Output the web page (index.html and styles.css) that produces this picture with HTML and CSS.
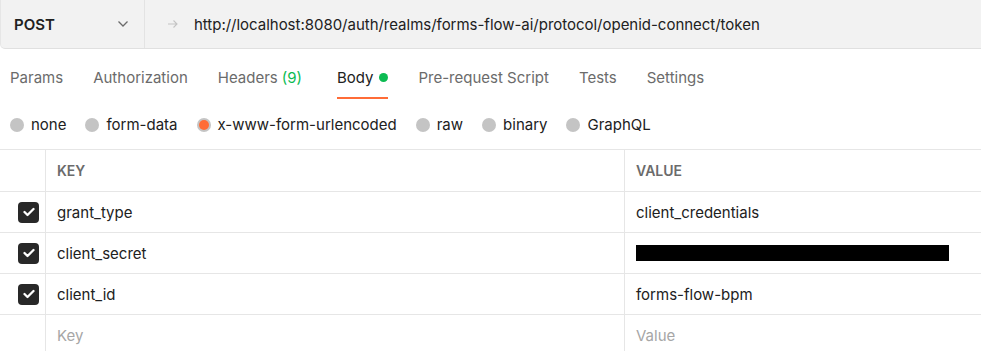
FILE: index.html
```html
<!DOCTYPE html>
<html>
<head>
<meta charset="utf-8">
<link rel="stylesheet" href="styles.css">
</head>
<body>
<div class="urlbar">
  <div class="method">
    <span class="method-name">POST</span>
    <svg class="chev" width="12" height="8" viewBox="0 0 12 8"><path d="M1.5 1.5 L6 6 L10.5 1.5" fill="none" stroke="#6b6b6b" stroke-width="1.3"/></svg>
  </div>
  <div class="url">
    <svg class="arrow" width="12" height="10" viewBox="0 0 12 10"><path d="M1 5 H10 M6.5 1.5 L10 5 L6.5 8.5" fill="none" stroke="#c4c4c4" stroke-width="1.1"/></svg>
    <span class="url-text">http://localhost:8080/auth/realms/forms-flow-ai/protocol/openid-connect/token</span>
  </div>
</div>

<div class="tabs">
  <span class="tab">Params</span>
  <span class="tab">Authorization</span>
  <span class="tab headers">Headers <span class="count">(9)</span></span>
  <span class="tab active">Body <span class="dot"></span></span>
  <span class="tab">Pre-request Script</span>
  <span class="tab">Tests</span>
  <span class="tab">Settings</span>
</div>

<div class="radios">
  <span class="radio"><span class="circle"></span>none</span>
  <span class="radio"><span class="circle"></span>form-data</span>
  <span class="radio"><span class="circle selected"></span>x-www-form-urlencoded</span>
  <span class="radio"><span class="circle"></span>raw</span>
  <span class="radio"><span class="circle"></span>binary</span>
  <span class="radio"><span class="circle"></span>GraphQL</span>
</div>

<div class="table">
  <div class="row head">
    <div class="cell chk"></div>
    <div class="cell key">KEY</div>
    <div class="cell val">VALUE</div>
  </div>
  <div class="row">
    <div class="cell chk"><span class="box"><svg width="12" height="10" viewBox="0 0 12 10"><path d="M1.5 5 L4.5 8 L10.5 2" fill="none" stroke="#fff" stroke-width="2.3" stroke-linecap="round" stroke-linejoin="round"/></svg></span></div>
    <div class="cell key">grant_type</div>
    <div class="cell val">client_credentials</div>
  </div>
  <div class="row">
    <div class="cell chk"><span class="box"><svg width="12" height="10" viewBox="0 0 12 10"><path d="M1.5 5 L4.5 8 L10.5 2" fill="none" stroke="#fff" stroke-width="2.3" stroke-linecap="round" stroke-linejoin="round"/></svg></span></div>
    <div class="cell key">client_secret</div>
    <div class="cell val"><span class="redact"></span></div>
  </div>
  <div class="row">
    <div class="cell chk"><span class="box"><svg width="12" height="10" viewBox="0 0 12 10"><path d="M1.5 5 L4.5 8 L10.5 2" fill="none" stroke="#fff" stroke-width="2.3" stroke-linecap="round" stroke-linejoin="round"/></svg></span></div>
    <div class="cell key">client_id</div>
    <div class="cell val">forms-flow-bpm</div>
  </div>
  <div class="row last">
    <div class="cell chk"></div>
    <div class="cell key ph">Key</div>
    <div class="cell val ph">Value</div>
  </div>
</div>
</body>
</html>
```

FILE: styles.css
```css
* { box-sizing: border-box; }
html, body { margin: 0; padding: 0; background: #fff; }
body {
  font-family: Inter, "Noto Sans", "Liberation Sans", sans-serif;
  font-size: 15px;
  color: #212121;
  width: 981px;
  height: 351px;
  overflow: hidden;
}

.urlbar {
  display: flex;
  height: 49px;
  background: #f2f2f2;
  border-bottom: 1px solid #e0e0e0;
  border-left: 1px solid #e6e6e6;
  border-radius: 0 0 0 5px;
  margin-right: -10px;
}
.method {
  width: 144px;
  display: flex;
  align-items: center;
  justify-content: space-between;
  padding: 0 15px 0 13px;
  border-right: 1px solid #e3e3e3;
}
.method-name { font-weight: 600; font-size: 15px; color: #212121; }
.chev { display: block; }
.url {
  flex: 1;
  display: flex;
  align-items: center;
  padding-left: 22px;
}
.arrow { display: block; margin-right: 15px; }
.url-text { color: #212121; letter-spacing: -0.02px; }

.tabs {
  display: flex;
  height: 50px;
  align-items: stretch;
  padding-left: 10px;
}
.tab {
  color: #6b6b6b;
  margin-right: 30px;
  position: relative;
  display: flex;
  align-items: center;
  padding-top: 7px;
}
.tab.headers { margin-right: 35px; }
.tab .count { color: #0cbb52; margin-left: 4px; }
.tab.active { color: #212121; }
.tab.active::after {
  content: "";
  position: absolute;
  left: 0; right: 0; bottom: 0;
  height: 2px;
  background: #ff6c37;
}
.dot {
  display: inline-block;
  width: 9px; height: 9px;
  border-radius: 50%;
  background: #0cbb52;
  margin-left: 6px;
}

.radios {
  display: flex;
  align-items: center;
  height: 50px;
  padding-left: 10px;
  padding-top: 1px;
}
.radio {
  display: flex;
  align-items: center;
  margin-right: 19px;
  color: #212121;
}
.circle {
  width: 14px; height: 14px;
  border-radius: 50%;
  background: #c4c4c4;
  margin-right: 7px;
  position: relative;
}
.circle.selected::after {
  content: "";
  position: absolute;
  left: 2px; top: 2px;
  width: 10px; height: 10px;
  border-radius: 50%;
  background: #ff6c37;
}

.table {
  border-top: 1px solid #e6e6e6;
}
.row {
  display: flex;
  height: 41px;
  border-bottom: 1px solid #e6e6e6;
}
.row.head { height: 42px; }
.row.last { border-bottom: none; }
.cell {
  display: flex;
  align-items: center;
}
.cell.chk {
  width: 46px;
  border-right: 1px solid #e6e6e6;
  padding-left: 18px;
}
.cell.key {
  width: 579px;
  border-right: 1px solid #e6e6e6;
  padding-left: 11px;
}
.cell.val {
  flex: 1;
  padding-left: 11px;
}
.head .cell.key, .head .cell.val {
  font-weight: 600;
  color: #6b6b6b;
  font-size: 14px;
}
.ph { color: #a6a6a6; }
.box {
  width: 21px; height: 21px;
  border-radius: 4px;
  background: #282828;
  display: flex;
  align-items: center;
  justify-content: center;
}
.box svg { display: block; }
.redact {
  display: block;
  width: 313px;
  height: 16px;
  background: #000;
}
```
